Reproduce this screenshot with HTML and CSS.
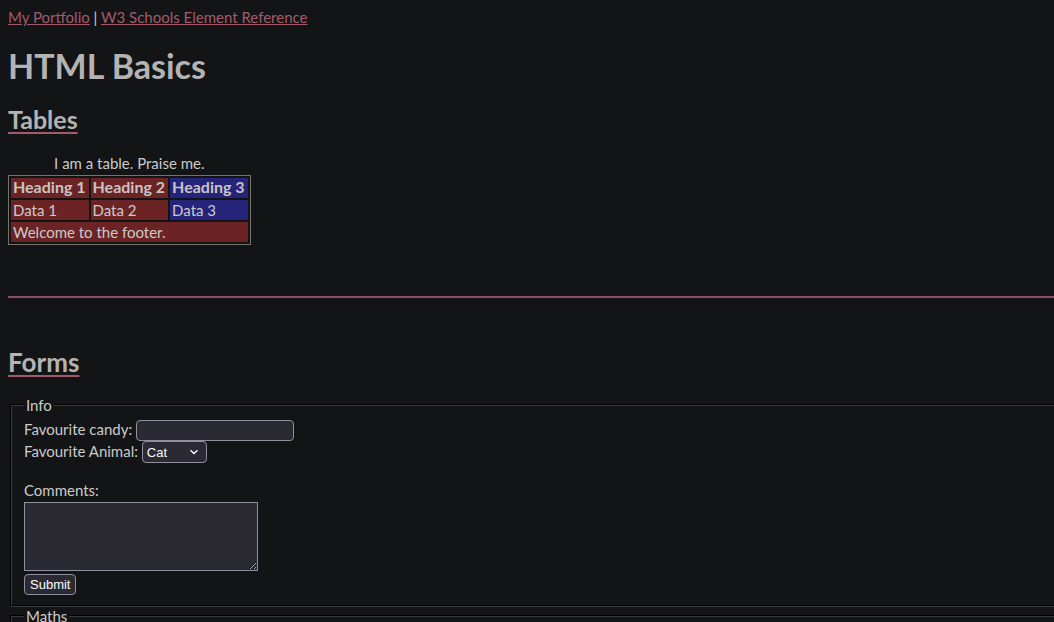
FILE: index.html
```html
<!DOCTYPE html>
<html lang="en">
<head>
    <meta charset="UTF-8">
    <meta name="viewport" content="width=device-width, initial-scale=1.0">
    <title>HTML Basics</title>
    <link rel="stylesheet" href="styles.css">
</head>
<body>
    <nav class="top-links">
        <a href="#">My Portfolio</a> | <a href="#">W3 Schools Element Reference</a>
    </nav>

    <h1>HTML Basics</h1>

    <h2>Tables</h2>
    <table class="demo-table">
        <caption>I am a table. Praise me.</caption>
        <thead>
            <tr>
                <th>Heading 1</th>
                <th>Heading 2</th>
                <th class="blue">Heading 3</th>
            </tr>
        </thead>
        <tbody>
            <tr>
                <td>Data 1</td>
                <td>Data 2</td>
                <td class="blue">Data 3</td>
            </tr>
        </tbody>
        <tfoot>
            <tr>
                <td colspan="3">Welcome to the footer.</td>
            </tr>
        </tfoot>
    </table>

    <hr>

    <h2 class="forms-title">Forms</h2>
    <form>
        <fieldset>
            <legend>Info</legend>
            <label for="candy">Favourite candy:</label>
            <input type="text" id="candy" name="candy"><br>
            <label for="animal">Favourite Animal:</label>
            <select id="animal" name="animal">
                <option>Cat</option>
                <option>Dog</option>
            </select><br>
            <br>
            <label for="comments">Comments:</label><br>
            <textarea id="comments" name="comments"></textarea><br>
            <button type="submit">Submit</button>
        </fieldset>
        <fieldset>
            <legend>Maths</legend>
            <p>2 + 2 = 4</p>
        </fieldset>
    </form>
</body>
</html>
```

FILE: styles.css
```css
html {
    overflow: hidden;
}

body {
    font-family: 'Lato', sans-serif;
    font-size: 15px;
    line-height: 18px;
    background-color: #131415;
    color: #cbcbcb;
    margin: 8px;
    min-width: 1200px;
}

a {
    color: #a35b6c;
}

h1 {
    color: #b3b3b3;
    font-size: 34px;
    line-height: 37px;
    margin: 21px 0;
}

h2 {
    color: #b3b3b3;
    font-size: 25px;
    line-height: 28px;
    margin: 20px 0;
    text-decoration: underline;
    text-decoration-color: #a35b6c;
    text-decoration-thickness: 2px;
    text-underline-offset: 3px;
}

.demo-table {
    border: 1px solid #77736b;
    border-spacing: 2px;
    margin-bottom: 51px;
}

.demo-table caption {
    line-height: 20px;
    padding-bottom: 2px;
}

.demo-table th,
.demo-table td {
    background-color: #6c2323;
    padding: 1px 2px;
    text-align: left;
}

.demo-table th {
    color: #c9c3c3;
    font-size: 16px;
    padding: 0 3px 2px 2px;
}

.demo-table .blue {
    background-color: #25237a;
}

hr {
    border: none;
    border-top: 2px solid #8e4e60;
    margin: 0;
}

.forms-title {
    font-size: 26px;
    margin-top: 50px;
}

fieldset {
    margin: 0 2px;
    border: 2px groove #3a3a3e;
    padding: 6px 12px 10px;
}

legend {
    padding: 0 2px;
}

input,
select,
textarea,
button {
    background-color: #2b2a33;
    color: #fbfbfe;
    border: 1px solid #8f8f9d;
    border-radius: 4px;
    font-family: 'Liberation Sans', sans-serif;
    font-size: 13px;
}

input {
    width: 150px;
    height: 19px;
    padding: 0 3px;
}

select {
    appearance: none;
    width: 65px;
    height: 22px;
    padding: 0 4px;
    background-image: url("data:image/svg+xml,%3Csvg xmlns='http://www.w3.org/2000/svg' width='10' height='6' viewBox='0 0 10 6'%3E%3Cpath d='M1.5 1.2 5 4.6 8.5 1.2' fill='none' stroke='%23fbfbfe' stroke-width='1.4'/%3E%3C/svg%3E");
    background-repeat: no-repeat;
    background-position: right 7px center;
}

textarea {
    width: 228px;
    height: 63px;
    border-radius: 0;
    margin-top: 3px;
}

button {
    height: 21px;
    padding: 0 5px;
}
```
